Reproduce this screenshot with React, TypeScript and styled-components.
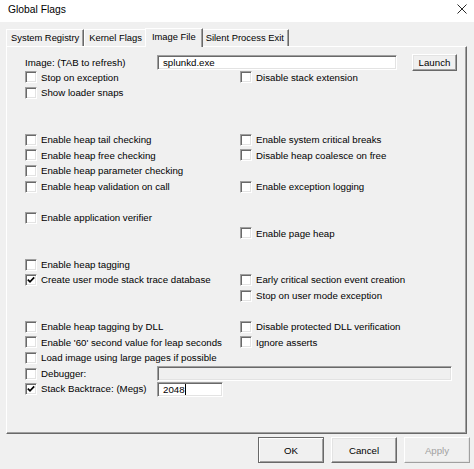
import React from "react"
import styled, { createGlobalStyle, css } from "styled-components"

const GlobalStyle = createGlobalStyle`
    html, body {
        margin: 0;
        padding: 0;
        background: #f0f0f0;
    }
    body {
        font-family: "Liberation Sans", Arial, sans-serif;
        font-size: 9.7px;
        color: #000;
    }
`;

const ROW = 15.6;

const sunken = css`
    border: 1px solid;
    border-color: #a0a0a0 #ffffff #ffffff #a0a0a0;
    box-shadow: inset 1px 1px #696969, inset -1px -1px #e3e3e3;
`;

const raised = css`
    border: 1px solid;
    border-color: #ffffff #696969 #696969 #ffffff;
    box-shadow: inset -1px -1px #a0a0a0, inset 1px 1px #e3e3e3;
    background: #f0f0f0;
`;

const Window = styled.div`
    width: 474px;
    height: 469px;
    display: flex;
    flex-direction: column;
    background: #f0f0f0;
    overflow: hidden;
`;

const TitleBar = styled.div`
    height: 22px;
    flex: none;
    display: flex;
    align-items: center;
    justify-content: space-between;
    padding: 0 8px 4px 8px;
    box-sizing: border-box;
    background: #ffffff;
`;

const Title = styled.span`
    font-size: 10.3px;
    color: #000;
`;

const CloseIcon = styled.svg`
    width: 10px;
    height: 10px;
    margin-right: -1px;
`;

const TabStrip = styled.div`
    display: flex;
    align-items: flex-end;
    height: 20px;
    margin-top: 4px;
    padding-left: 6px;
    position: relative;
    z-index: 1;
`;

const Tab = styled.div<{ $active?: boolean }>`
    height: ${p => (p.$active ? 19 : 17)}px;
    box-sizing: border-box;
    display: flex;
    align-items: center;
    padding: 0 ${p => (p.$active ? 6 : 4)}px 1px;
    margin: 0 ${p => (p.$active ? -2 : 0)}px ${p => (p.$active ? -1 : 0)}px;
    background: #f0f0f0;
    border-left: 1px solid #ffffff;
    border-top: 1px solid #ffffff;
    border-right: 1px solid #696969;
    box-shadow: inset -1px 0 #a0a0a0;
    font-size: 9.4px;
    white-space: nowrap;
    ${p => p.$active && css`
        padding-bottom: 3px;
        z-index: 2;
    `}
`;

const Panel = styled.div`
    margin-left: 6px;
    width: 461px;
    height: 388px;
    flex: none;
    box-sizing: border-box;
    border-left: 1px solid #ffffff;
    border-top: 1px solid #ffffff;
    border-right: 1px solid #696969;
    border-bottom: 1px solid #696969;
    box-shadow: inset -1px -1px #a0a0a0;
    padding: 7px 0 0 18px;
`;

const ImageRow = styled.div`
    display: grid;
    grid-template-columns: 132px 240px 45px;
    height: ${ROW}px;
    align-items: center;
`;

const Label = styled.span`
    white-space: nowrap;
    line-height: ${ROW}px;
`;

const TextInput = styled.div<{ $disabled?: boolean; $width: number }>`
    ${sunken};
    width: ${p => p.$width}px;
    height: 15px;
    box-sizing: border-box;
    background: ${p => (p.$disabled ? "#f0f0f0" : "#ffffff")};
    padding-left: 5px;
    display: flex;
    align-items: center;
    white-space: nowrap;
`;

const Caret = styled.span`
    display: inline-block;
    width: 1px;
    height: 11px;
    background: #000;
`;

const Button = styled.button<{ $default?: boolean; $width: number; $height: number }>`
    ${raised};
    width: ${p => p.$width}px;
    height: ${p => p.$height}px;
    padding: 0;
    font-family: "Liberation Sans", Arial, sans-serif;
    font-size: 9.7px;
    color: #000;
    ${p => p.$default && css`
        border-color: #696969;
        box-shadow: inset 1px 1px #ffffff, inset -1px -1px #a0a0a0;
    `}
    &:disabled {
        color: #a0a0a0;
        border-color: #ffffff #a0a0a0 #a0a0a0 #ffffff;
        box-shadow: inset -1px -1px #e3e3e3;
    }
`;

const LaunchButton = styled(Button)`
    margin-left: 15px;
`;

const FlagGrid = styled.div`
    display: grid;
    grid-template-columns: 215px 1fr;
    grid-auto-rows: ${ROW}px;
`;

const Flag = styled.label`
    display: flex;
    align-items: center;
    gap: 4px;
    white-space: nowrap;
`;

const Box = styled.span`
    ${sunken};
    width: 12px;
    height: 12px;
    flex: none;
    box-sizing: border-box;
    background: #ffffff;
    display: flex;
    align-items: center;
    justify-content: center;
`;

const FieldRow = styled.div`
    grid-column: 1 / -1;
    display: grid;
    grid-template-columns: 132px auto;
    align-items: center;
`;

const Footer = styled.div`
    display: flex;
    justify-content: flex-end;
    gap: 7px;
    padding: 3px 4px 0 0;
`;

const Check = ({ checked, children }: { checked?: boolean; children: React.ReactNode }) => (
    <Flag>
        <Box>
            {checked ? (
                <svg width="8" height="8" viewBox="0 0 8 8">
                    <path d="M0.8 3.6 L3 5.8 L7.2 1.4" fill="none" stroke="#000" strokeWidth="1.7" />
                </svg>
            ) : null}
        </Box>
        <Label>{children}</Label>
    </Flag>
)

type Cell = { text: string; checked?: boolean } | null

const rows: [Cell, Cell][] = [
    [{ text: "Stop on exception" }, { text: "Disable stack extension" }],
    [{ text: "Show loader snaps" }, null],
    [null, null],
    [null, null],
    [{ text: "Enable heap tail checking" }, { text: "Enable system critical breaks" }],
    [{ text: "Enable heap free checking" }, { text: "Disable heap coalesce on free" }],
    [{ text: "Enable heap parameter checking" }, null],
    [{ text: "Enable heap validation on call" }, { text: "Enable exception logging" }],
    [null, null],
    [{ text: "Enable application verifier" }, null],
    [null, { text: "Enable page heap" }],
    [null, null],
    [{ text: "Enable heap tagging" }, null],
    [{ text: "Create user mode stack trace database", checked: true }, { text: "Early critical section event creation" }],
    [null, { text: "Stop on user mode exception" }],
    [null, null],
    [{ text: "Enable heap tagging by DLL" }, { text: "Disable protected DLL verification" }],
    [{ text: "Enable '60' second value for leap seconds" }, { text: "Ignore asserts" }],
    [{ text: "Load image using large pages if possible" }, null],
]

const tabs = ["System Registry", "Kernel Flags", "Image File", "Silent Process Exit"]

export default function App() {
    return (
        <Window>
            <GlobalStyle />
            <TitleBar>
                <Title>Global Flags</Title>
                <CloseIcon viewBox="0 0 10 10">
                    <path d="M0.5 0.5 L9.5 9.5 M9.5 0.5 L0.5 9.5" stroke="#111" strokeWidth="0.9" />
                </CloseIcon>
            </TitleBar>
            <TabStrip>
                {tabs.map(t => (
                    <Tab key={t} $active={t === "Image File"}>{t}</Tab>
                ))}
            </TabStrip>
            <Panel>
                <ImageRow>
                    <Label>Image: (TAB to refresh)</Label>
                    <TextInput $width={240}>splunkd.exe</TextInput>
                    <LaunchButton $width={45} $height={17}>Launch</LaunchButton>
                </ImageRow>
                <FlagGrid>
                    {rows.map((row, i) =>
                        row.map((cell, j) =>
                            cell ? (
                                <Check key={`${i}-${j}`} checked={cell.checked}>{cell.text}</Check>
                            ) : (
                                <span key={`${i}-${j}`} />
                            )
                        )
                    )}
                    <FieldRow>
                        <Check>Debugger:</Check>
                        <TextInput $width={295} $disabled />
                    </FieldRow>
                    <FieldRow>
                        <Check checked>Stack Backtrace: (Megs)</Check>
                        <TextInput $width={66}>2048<Caret /></TextInput>
                    </FieldRow>
                </FlagGrid>
            </Panel>
            <Footer>
                <Button $default $width={66} $height={26}>OK</Button>
                <Button $width={66} $height={26}>Cancel</Button>
                <Button $width={66} $height={26} disabled>Apply</Button>
            </Footer>
        </Window>
    )
}
